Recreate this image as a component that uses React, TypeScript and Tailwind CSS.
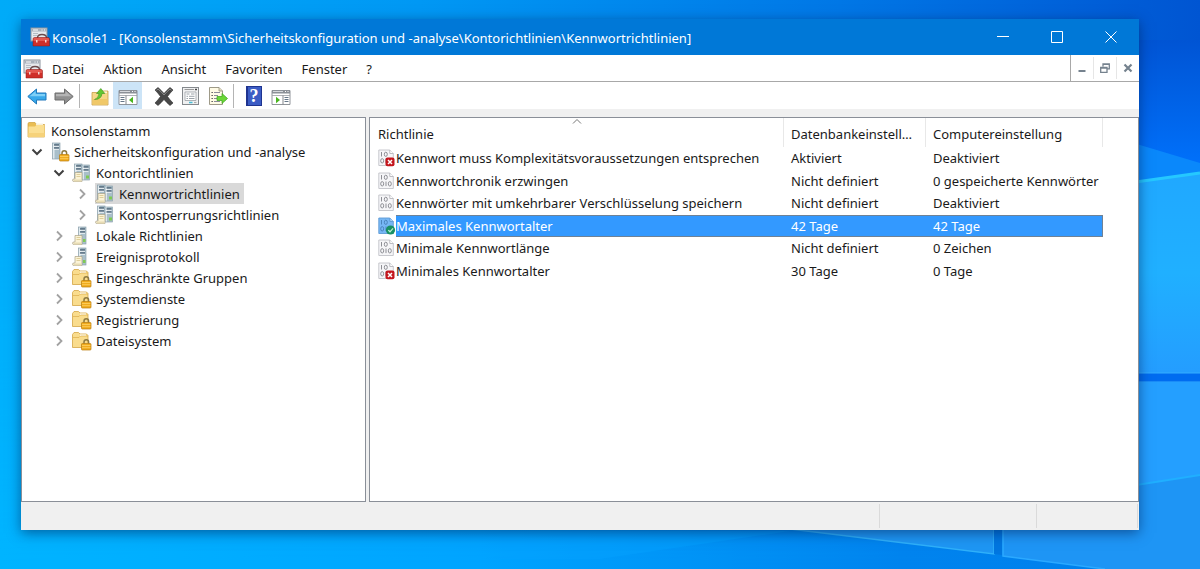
import React, { useState } from "react";

type IconProps = { className?: string };

function ConsoleIcon({ className = "size-5" }: IconProps) {
  return (
    <svg viewBox="0 0 20 20" className={className} aria-hidden="true">
      <rect x="1" y="1" width="16" height="13" fill="#e6e9ec" stroke="#8b949d" />
      <rect x="1.500" y="1.500" width="15" height="3" fill="#a7b0ba" />
      <path d="M11.500 3h1M14 3h1M3 3h5" stroke="#fff" />
      <path d="M3 6.500h5M3 8.500h4" stroke="#b4bcc4" />
      <path d="M7.500 11q0-3.500 4.500-3.500t4.500 3.500" fill="none" stroke="#6b4a4c" strokeWidth="1.300" />
      <path d="M3 12q0-1.500 1.500-1.500h13.500q1.500 0 1.500 1.500v7H3z" fill="#cf2f29" stroke="#8e1510" strokeWidth=".5" />
      <path d="M3.500 12q0-1 1-1h13.500q1 0 1 1v2h-15.500z" fill="#e4574f" />
      <path d="M6 13h1.500v2.500H6zM15 13h1.500v2.500H15z" fill="#f4d5d0" />
    </svg>
  );
}

function FolderIcon({ className = "size-5" }: IconProps) {
  return (
    <svg viewBox="0 0 20 20" className={className} aria-hidden="true">
      <path d="M1 3V16h16.500V3.500H9.500L8 1.500H2Q1 1.500 1 3z" fill="#e9bd54" stroke="#cf9f3a" strokeWidth=".7" />
      <path d="M9 2.500h7v2H9z" fill="#f7f0dc" />
      <path d="M1.500 5.500h6.500l1.500-1.500h8V16h-16z" fill="#fbdf92" />
      <path d="M1.500 12h16v4h-16z" fill="#f6d27a" />
    </svg>
  );
}

function Padlock() {
  return (
    <g>
      <path d="M12 13v-2q0-2.300 2.300-2.300t2.300 2.300v2" fill="none" stroke="#8d7a42" strokeWidth="1.500" />
      <rect x="9.500" y="12.500" width="9.500" height="6.500" rx=".8" fill="#f0ab1d" stroke="#b97c10" strokeWidth=".7" />
      <path d="M10 14.500h8.500M10 16.700h8.500" stroke="#ffd266" strokeWidth=".8" />
    </g>
  );
}

function LockedFolderIcon({ className = "size-5" }: IconProps) {
  return (
    <svg viewBox="0 0 20 20" className={className} aria-hidden="true">
      <path d="M.5 3.500V16.500H16V4.500L14.500 3H8L6.500 1.500H2z" fill="#f9dc8d" stroke="#d3a445" strokeWidth=".8" />
      <path d="M8 3.500h6v1.500H8z" fill="#fff" />
      <path d="M1 6.500h6l1.500-1.500H16" fill="none" stroke="#e0b352" strokeWidth=".8" />
      <Padlock />
    </svg>
  );
}

function Tower({ x, y, h }: { x: number; y: number; h: number }) {
  return (
    <g>
      <rect x={x} y={y} width="7.500" height={h} fill="#a9bfca" stroke="#8fa3ae" strokeWidth=".7" />
      <rect x={x + 0.5} y={y + 0.5} width="1.500" height={h - 1} fill="#dfe9ee" />
      <path d={`M${x + 1.5} ${y + 2}h5M${x + 1.5} ${y + 5}h5`} stroke="#4f6678" strokeWidth="1.300" />
      <path d={`M${x + 1} ${y + 3.3}h5.500M${x + 1} ${y + 6.3}h5.500`} stroke="#fff" strokeWidth=".8" />
    </g>
  );
}

function SecurityIcon({ className = "size-5" }: IconProps) {
  return (
    <svg viewBox="0 0 20 20" className={className} aria-hidden="true">
      <Tower x={2.5} y={1} h={16} />
      <Padlock />
    </svg>
  );
}

function Scroll() {
  return (
    <g>
      <path d="M3 9.500h7v9H2q-1.500 0-1.500-1.300T2 16h1z" fill="#fbf3d6" stroke="#a9a086" strokeWidth=".7" />
      <path d="M4.500 11.500h4M4.500 13.500h4" stroke="#d6c48c" strokeWidth=".8" />
      <path d="M2 18.500h8q-1.500-.5-1-2H2" fill="#e7dcb4" />
    </g>
  );
}

function ServersIcon({ className = "size-5" }: IconProps) {
  return (
    <svg viewBox="0 0 20 20" className={className} aria-hidden="true">
      <Tower x={2.5} y={1} h={14} />
      <Tower x={10} y={2} h={15} />
      <path d="M14 12.500h3v3h-3z" fill="#7ecb53" />
      <Scroll />
    </svg>
  );
}

function ServerIcon({ className = "size-5" }: IconProps) {
  return (
    <svg viewBox="0 0 20 20" className={className} aria-hidden="true">
      <Tower x={6.5} y={1} h={17} />
      <path d="M11 13h2.500v3H11z" fill="#7ecb53" />
      <Scroll />
    </svg>
  );
}

type Status = "none" | "error" | "ok";

function PolicyIcon({ status }: { status: Status }) {
  const ok = status === "ok";
  return (
    <svg viewBox="0 0 18 18" className="size-[18px] shrink-0" aria-hidden="true">
      <path d="M.8 1h11l3.500 3.500V16.500H.8z" fill={ok ? "#77b7f5" : "#f6f6f8"} stroke={ok ? "#5d9bd6" : "#c2c3c8"} strokeWidth=".9" />
      <path d="M11.800 1v3.500h3.500" fill={ok ? "#a5d0f7" : "#fff"} stroke={ok ? "#5d9bd6" : "#b5b6bb"} strokeWidth=".9" />
      <g fill="none" stroke={ok ? "#4a85bd" : "#8e8f95"} strokeWidth="1">
        <path d="M3.500 3v4.500" />
        <ellipse cx="7.800" cy="5.300" rx="1.500" ry="2.100" />
        <ellipse cx="4.200" cy="11.800" rx="1.500" ry="2.200" />
        <path d="M8 9.500v4.600" />
        <ellipse cx="11.800" cy="11.800" rx="1.500" ry="2.200" />
      </g>
      {status === "error" && (
        <g>
          <rect x="7.500" y="8.500" width="9" height="8.800" rx="2" fill="#c4161d" />
          <path d="m10 11 4 4M14 11l-4 4" stroke="#fff" strokeWidth="1.500" />
        </g>
      )}
      {ok && (
        <g>
          <circle cx="12.500" cy="13" r="4.600" fill="#189064" />
          <path d="m10.300 13.100 1.700 1.700 3-3.500" fill="none" stroke="#bdf0d2" strokeWidth="1.300" />
        </g>
      )}
    </svg>
  );
}

function ArrowIcon({ dir }: { dir: "back" | "forward" }) {
  const back = dir === "back";
  return (
    <svg viewBox="0 0 20 20" className="size-5" aria-hidden="true">
      <path
        d={back ? "M.8 10.500 9.500 3v4h9.500v7H9.500v4z" : "M19.200 10.500 10.500 3v4H1v7h9.500v4z"}
        fill={back ? "#38a9ea" : "#909090"}
        stroke={back ? "#2379bb" : "#6c6c6c"}
      />
      <path
        d={back ? "M2.600 10.200 8.600 5.200v2.800H18v2.200z" : "M17.400 10.200 11.400 5.200v2.800H2v2.200z"}
        fill={back ? "#7fd0f7" : "#b4b4b4"}
      />
    </svg>
  );
}

function UpFolderIcon() {
  return (
    <svg viewBox="0 0 20 20" className="size-5" aria-hidden="true">
      <path d="M2 6.500h6l1.500-1.500H18v14H2z" fill="#f6d788" stroke="#c9a04a" strokeWidth=".8" />
      <path d="M11 5.500h6V7h-6z" fill="#fff6da" />
      <path d="M2.500 13h15v5.500h-15z" fill="#f0c868" />
      <path d="M4.500 13.500q4-1 4.500-6H6.500L10.800 2.500l4 5H12q-.5 6-7.500 6z" fill="#63c832" stroke="#3c931c" strokeWidth=".6" />
    </svg>
  );
}

function PaneIcon({ dir }: { dir: "left" | "right" }) {
  const left = dir === "left";
  return (
    <svg viewBox="0 0 20 20" className="size-5" aria-hidden="true">
      <path d="M1 4.500h18v14H1z" fill="#fff" stroke="#85898e" strokeWidth=".9" />
      <path d="M1 4h18v3.500H1z" fill="#8b9097" />
      <path d="M2 5.500h10" stroke="#d5d8dc" />
      <path d="M14 5.500h1M16.500 5.500h1" stroke="#fff" />
      <path d="M1 9.500h18" stroke="#9a9ea3" strokeWidth=".8" />
      <path d={left ? "M8 9.500v9" : "M12 9.500v9"} stroke="#85898e" />
      <path
        d={left ? "M2.500 11.500h4M2.500 13.500h4M2.500 15.500h4" : "M13.500 11.500h4M13.500 13.500h4M13.500 15.500h4"}
        stroke="#667788"
        strokeWidth="1"
      />
      <path d={left ? "M15 10.700v6.600L11 14z" : "M5 10.700v6.600L9 14z"} fill="#4ab51f" />
    </svg>
  );
}

function DeleteIcon() {
  return (
    <svg viewBox="0 0 20 20" className="size-5" aria-hidden="true">
      <path d="M1 4 4 1.500q3 2.500 6 6 3-3.500 6-6L19 4q-3 3-5.500 6.500Q16 14 19 17l-3 2.500q-3-2.500-6-6-3 3.500-6 6L1 17q3-3 5.500-6.500Q4 7 1 4z" fill="#484848" stroke="#2b2b2b" strokeWidth=".6" />
      <path d="M2.500 4.300 4 3q3 2.500 6 6 3-3.500 6-6l1.500 1.300" fill="none" stroke="#8a8a8a" />
    </svg>
  );
}

function PropertiesIcon() {
  return (
    <svg viewBox="0 0 20 20" className="size-5" aria-hidden="true">
      <rect x="1.500" y="1.500" width="16" height="17" fill="#f0f1f2" stroke="#85898d" />
      <path d="M3.500 3.500H13" stroke="#999" />
      <path d="M14 3.500h2" stroke="#444" strokeWidth="1.500" />
      <path d="M4 6h11v8.500H4z" fill="#fff" stroke="#9aa0a5" strokeWidth=".8" />
      <path d="M5.500 8h3M10 8h3.500M5.500 10.300H7M8 10.300h5.500M5.500 12.500H7M8 12.500h5.500" stroke="#9aa2a9" />
      <path d="M8 16.500h3.500" stroke="#49bdd6" strokeWidth="1.500" />
      <path d="M13 16.500h2.500" stroke="#aaa" strokeWidth="1.200" />
    </svg>
  );
}

function ExportIcon() {
  return (
    <svg viewBox="0 0 20 20" className="size-5" aria-hidden="true">
      <path d="M1.500 1.500H11L14.500 5v13.500h-13z" fill="#fffbe6" stroke="#938f7c" strokeWidth=".9" />
      <path d="M11 1.500V5h3.500" fill="#e6dfbf" stroke="#938f7c" strokeWidth=".8" />
      <path d="M3.500 6.500h1.300M3.500 9.500h1.300M3.500 12.500h1.300M3.500 15.500h1.300" stroke="#444" strokeWidth="1.200" />
      <path d="M6 6.500h6M6 9.500h4M6 12.500h4M6 15.500h6" stroke="#8b8b99" />
      <path d="M9 10.500h5V7.500l5.500 5-5.500 5v-3H9z" fill="#6bd737" stroke="#3aa31b" strokeWidth=".7" />
    </svg>
  );
}

function HelpIcon() {
  return (
    <span className="flex h-5 w-4 items-center justify-center border border-l-2 border-[#1f3490] bg-[#3b5cc4] font-['Liberation_Serif',serif] text-lg leading-5 font-bold text-white">
      ?
    </span>
  );
}

function Chevron({ open }: { open: boolean }) {
  return (
    <svg viewBox="0 0 12 12" className="size-3" aria-hidden="true">
      {open ? (
        <path d="m1.500 3.500 4.500 4.500 4.500-4.500" fill="none" stroke="#404040" strokeWidth="2" />
      ) : (
        <path d="m4 1.500 4.500 4.500-4.500 4.500" fill="none" stroke="#a2a2a2" strokeWidth="1.800" />
      )}
    </svg>
  );
}

type TreeItem = {
  label: string;
  indent: string;
  icon: (p: IconProps) => React.ReactElement;
  state: "open" | "closed" | "root";
};

const tree: TreeItem[] = [
  { label: "Konsolenstamm", indent: "pl-[5px]", icon: FolderIcon, state: "root" },
  { label: "Sicherheitskonfiguration und -analyse", indent: "pl-[5px]", icon: SecurityIcon, state: "open" },
  { label: "Kontorichtlinien", indent: "pl-[27px]", icon: ServersIcon, state: "open" },
  { label: "Kennwortrichtlinien", indent: "pl-[50px]", icon: ServersIcon, state: "closed" },
  { label: "Kontosperrungsrichtlinien", indent: "pl-[50px]", icon: ServersIcon, state: "closed" },
  { label: "Lokale Richtlinien", indent: "pl-[27px]", icon: ServerIcon, state: "closed" },
  { label: "Ereignisprotokoll", indent: "pl-[27px]", icon: ServerIcon, state: "closed" },
  { label: "Eingeschränkte Gruppen", indent: "pl-[27px]", icon: LockedFolderIcon, state: "closed" },
  { label: "Systemdienste", indent: "pl-[27px]", icon: LockedFolderIcon, state: "closed" },
  { label: "Registrierung", indent: "pl-[27px]", icon: LockedFolderIcon, state: "closed" },
  { label: "Dateisystem", indent: "pl-[27px]", icon: LockedFolderIcon, state: "closed" },
];

const policies: { name: string; db: string; computer: string; status: Status }[] = [
  { name: "Kennwort muss Komplexitätsvoraussetzungen entsprechen", db: "Aktiviert", computer: "Deaktiviert", status: "error" },
  { name: "Kennwortchronik erzwingen", db: "Nicht definiert", computer: "0 gespeicherte Kennwörter", status: "none" },
  { name: "Kennwörter mit umkehrbarer Verschlüsselung speichern", db: "Nicht definiert", computer: "Deaktiviert", status: "none" },
  { name: "Maximales Kennwortalter", db: "42 Tage", computer: "42 Tage", status: "ok" },
  { name: "Minimale Kennwortlänge", db: "Nicht definiert", computer: "0 Zeichen", status: "none" },
  { name: "Minimales Kennwortalter", db: "30 Tage", computer: "0 Tage", status: "error" },
];

function Wallpaper() {
  return (
    <svg viewBox="0 0 1200 569" preserveAspectRatio="none" className="absolute inset-0 size-full" aria-hidden="true">
      <defs>
        <linearGradient id="sky">
          <stop offset="0" stopColor="#00abf8" />
          <stop offset=".35" stopColor="#0098f4" />
          <stop offset=".7" stopColor="#0077e6" />
          <stop offset="1" stopColor="#0055d2" />
        </linearGradient>
        <linearGradient id="floor">
          <stop offset="0" stopColor="#00b4ff" />
          <stop offset=".4" stopColor="#00a4ff" />
          <stop offset=".75" stopColor="#0084ee" />
          <stop offset="1" stopColor="#0080ec" />
        </linearGradient>
        <linearGradient id="fade" x2="0" y2="1">
          <stop offset="0" stopColor="#fff" stopOpacity="0" />
          <stop offset="1" stopColor="#fff" />
        </linearGradient>
        <mask id="lower">
          <path d="M0 60h1200v509H0z" fill="url(#fade)" />
        </mask>
        <linearGradient id="dusk" x2="0" y2="1">
          <stop offset="0" stopColor="#0054d4" />
          <stop offset="1" stopColor="#0074ff" />
        </linearGradient>
        <linearGradient id="upper" x2="0" y2="1">
          <stop offset="0" stopColor="#20a8ff" />
          <stop offset=".5" stopColor="#20b0ff" />
          <stop offset="1" stopColor="#249dff" />
        </linearGradient>
      </defs>
      <path d="M0 0h1200v569H0z" fill="url(#sky)" />
      <path d="M0 60h1200v509H0z" fill="url(#floor)" mask="url(#lower)" />
      <path d="M1100 40h100v140h-100z" fill="url(#dusk)" />
      <path d="M1100 133 1200 163v20h-100z" fill="#0a88fb" />
      <path d="M1100 187 1200 173v200h-100z" fill="url(#upper)" />
      <path d="M1100 187 1200 173" stroke="#25c8ff" strokeWidth="3" />
      <path d="M1100 373h100v9h-100z" fill="#006cf0" />
      <path d="M1100 373h100M1100 382h100" stroke="#35adff" />
      <path d="M790 531 600 559H500V531z" fill="#04a3ff" opacity=".4" />
      <path d="M790 529H994v25z" fill="#1e96f3" />
      <path d="M790 529 994 554V529" fill="none" stroke="#2fb0fa" strokeWidth="1.500" />
      <path d="M994 529h8v26l-8-1z" fill="#0076e0" />
      <path d="M1003 382h197v187h-95l-102-13z" fill="#249fff" />
      <path d="M1003 505 1200 475v94h-95l-102-13z" fill="#1e95f5" />
      <path d="M1003 382v174l102 13" fill="none" stroke="#2ba9ff" strokeWidth="1.500" />
      <path d="M1130 486 1200 475" stroke="#20afff" strokeWidth="2" />
    </svg>
  );
}

function ToolButton({ label, active, children }: { label: string; active?: boolean; children: React.ReactNode }) {
  return (
    <button
      type="button"
      aria-label={label}
      className={active ? "flex h-full w-[29px] items-center justify-center bg-[#cce4f7]" : "flex h-full w-[27px] items-center justify-center"}
    >
      {children}
    </button>
  );
}

function ToolSeparator() {
  return <span className="mr-1.5 ml-0.5 h-6 w-px bg-[#b4b4b4]" />;
}

function CellText({ last, children }: { last?: boolean; children: React.ReactNode }) {
  return (
    <span
      className={`block h-[22px] flex-1 border-y border-transparent group-aria-selected:border-[#6f8296] group-aria-selected:bg-[#3399ff] ${last ? "border-r" : ""}`}
    >
      {children}
    </span>
  );
}

export default function App() {
  const [node, setNode] = useState(3);
  const [row, setRow] = useState(3);

  return (
    <div className="relative flex min-h-screen flex-col overflow-hidden bg-[#009bf5] font-['Noto_Sans',sans-serif] text-[13px] leading-5 text-[#1a1a1a]">
      <Wallpaper />
      <main className="relative mt-[19px] mr-[61px] mb-[39px] ml-[21px] flex flex-1 flex-col bg-[#f0f0f0] shadow-[0_3px_12px_rgba(0,30,80,0.55)]">
        <header className="flex h-9 shrink-0 items-center bg-[#0078d7] pl-[9px] text-white">
          <ConsoleIcon />
          <h1 className="ml-0.5 flex-1 truncate pt-px">
            Konsole1 - [Konsolenstamm\Sicherheitskonfiguration und -analyse\Kontorichtlinien\Kennwortrichtlinien]
          </h1>
          <div className="flex h-full pr-px">
            <button type="button" aria-label="Minimieren" className="flex h-full w-[54px] items-center justify-center">
              <svg viewBox="0 0 12 12" className="size-3"><path d="M0 5.500h12" stroke="#fff" /></svg>
            </button>
            <button type="button" aria-label="Maximieren" className="flex h-full w-[54px] items-center justify-center">
              <svg viewBox="0 0 12 12" className="size-3"><path d="M.5.5h11v11H.5z" fill="none" stroke="#fff" /></svg>
            </button>
            <button type="button" aria-label="Schließen" className="flex h-full w-[54px] items-center justify-center">
              <svg viewBox="0 0 12 12" className="size-3"><path d="m.5.5 11 11M11.500.5l-11 11" stroke="#fff" /></svg>
            </button>
          </div>
        </header>

        <div className="flex h-[27px] shrink-0 items-stretch border-b border-[#a8a8a8] bg-white">
          <nav className="flex flex-1 items-center border-r border-[#a8a8a8] pt-px pl-0.5">
            <ConsoleIcon />
            <div className="ml-[9px] flex items-center gap-[19px]">
              {["Datei", "Aktion", "Ansicht", "Favoriten", "Fenster", "?"].map((m) => (
                <button key={m} type="button">{m}</button>
              ))}
            </div>
          </nav>
          <div className="my-0.5 flex divide-x divide-[#e6e6e6]">
            <button type="button" aria-label="Fenster minimieren" className="flex w-[23px] items-center justify-center">
              <svg viewBox="0 0 10 10" className="size-2.5"><path d="M1.500 8h7" stroke="#75828e" strokeWidth="2" /></svg>
            </button>
            <button type="button" aria-label="Fenster wiederherstellen" className="flex w-[23px] items-center justify-center">
              <svg viewBox="0 0 10 10" className="size-2.5"><path d="M3 3.500V.8h6.300v5H7M3 1.300h6.300M.7 4.500H7v4.800H.7zM.7 5H7" fill="none" stroke="#75828e" strokeWidth="1.300" /></svg>
            </button>
            <button type="button" aria-label="Fenster schließen" className="flex w-[22px] items-center justify-center">
              <svg viewBox="0 0 10 10" className="size-2.5"><path d="m1.500 1.500 7 7M8.500 1.500l-7 7" stroke="#75828e" strokeWidth="2.200" /></svg>
            </button>
          </div>
        </div>

        <div role="toolbar" aria-label="Werkzeuge" className="flex h-[27px] shrink-0 items-center bg-white pl-0.5">
          <ToolButton label="Zurück"><ArrowIcon dir="back" /></ToolButton>
          <ToolButton label="Vorwärts"><ArrowIcon dir="forward" /></ToolButton>
          <ToolSeparator />
          <ToolButton label="Eine Ebene nach oben"><UpFolderIcon /></ToolButton>
          <ToolButton label="Konsolenstruktur" active><PaneIcon dir="left" /></ToolButton>
          <span className="w-2" />
          <ToolButton label="Löschen"><DeleteIcon /></ToolButton>
          <ToolButton label="Eigenschaften"><PropertiesIcon /></ToolButton>
          <ToolButton label="Liste exportieren"><ExportIcon /></ToolButton>
          <ToolSeparator />
          <ToolButton label="Hilfe"><HelpIcon /></ToolButton>
          <ToolButton label="Aktionsbereich"><PaneIcon dir="right" /></ToolButton>
        </div>

        <div className="mt-2 flex flex-1 gap-[3px]">
          <ul role="tree" className="w-[345px] shrink-0 border border-[#8a8f98] bg-white pt-0.5">
            {tree.map((item, i) => {
              const Icon = item.icon;
              return (
                <li key={item.label} role="treeitem" aria-selected={node === i} className={`flex h-[21px] items-center ${item.indent}`}>
                  {item.state !== "root" && (
                    <span className="mr-[3px] flex w-5 justify-center"><Chevron open={item.state === "open"} /></span>
                  )}
                  <button type="button" onClick={() => setNode(i)} className={node === i ? "flex h-[21px] items-center bg-[#d9d9d9] pr-1" : "flex items-center pr-1"}>
                    <Icon />
                    <span className="ml-1">{item.label}</span>
                  </button>
                </li>
              );
            })}
          </ul>

          <div className="min-w-0 flex-1 border border-[#8a8f98] bg-white">
            <table className="w-[733px] table-fixed border-separate border-spacing-0 text-left">
              <colgroup>
                <col className="w-[414px]" />
                <col className="w-[142px]" />
                <col />
              </colgroup>
              <thead>
                <tr className="h-[29px]">
                  <th className="relative border-r border-[#e8e8e8] p-0 pt-0.5 pl-2 font-normal">
                    Richtlinie
                    <span className="absolute inset-x-0 top-px flex justify-center">
                      <svg viewBox="0 0 10 5" className="h-[5px] w-2.5" aria-hidden="true">
                        <path d="m1 4.500 4-4 4 4" fill="none" stroke="#777" />
                      </svg>
                    </span>
                  </th>
                  <th className="truncate border-r border-[#e8e8e8] p-0 pt-0.5 pr-3 pl-[7px] font-normal">Datenbankeinstellung</th>
                  <th className="border-r border-[#e8e8e8] p-0 pt-0.5 pl-[7px] font-normal">Computereinstellung</th>
                </tr>
              </thead>
              <tbody>
                {policies.map((p, i) => (
                  <tr
                    key={p.name}
                    onClick={() => setRow(i)}
                    aria-selected={row === i}
                    className="group h-[22px] whitespace-nowrap even:h-[23px] aria-selected:text-white"
                  >
                    <td className="p-0 pl-2">
                      <div className="flex items-center">
                        <PolicyIcon status={p.status} />
                        <CellText>{p.name}</CellText>
                      </div>
                    </td>
                    <td className="p-0"><CellText><span className="pl-[7px]">{p.db}</span></CellText></td>
                    <td className="p-0"><CellText last><span className="pl-[7px]">{p.computer}</span></CellText></td>
                  </tr>
                ))}
              </tbody>
            </table>
          </div>
        </div>

        <footer className="flex h-7 shrink-0 justify-end py-0.5 pr-px">
          <span className="w-[157px] border-l border-[#dadada]" />
          <span className="w-[102px] border-x border-[#dadada]" />
        </footer>
      </main>
    </div>
  );
}
